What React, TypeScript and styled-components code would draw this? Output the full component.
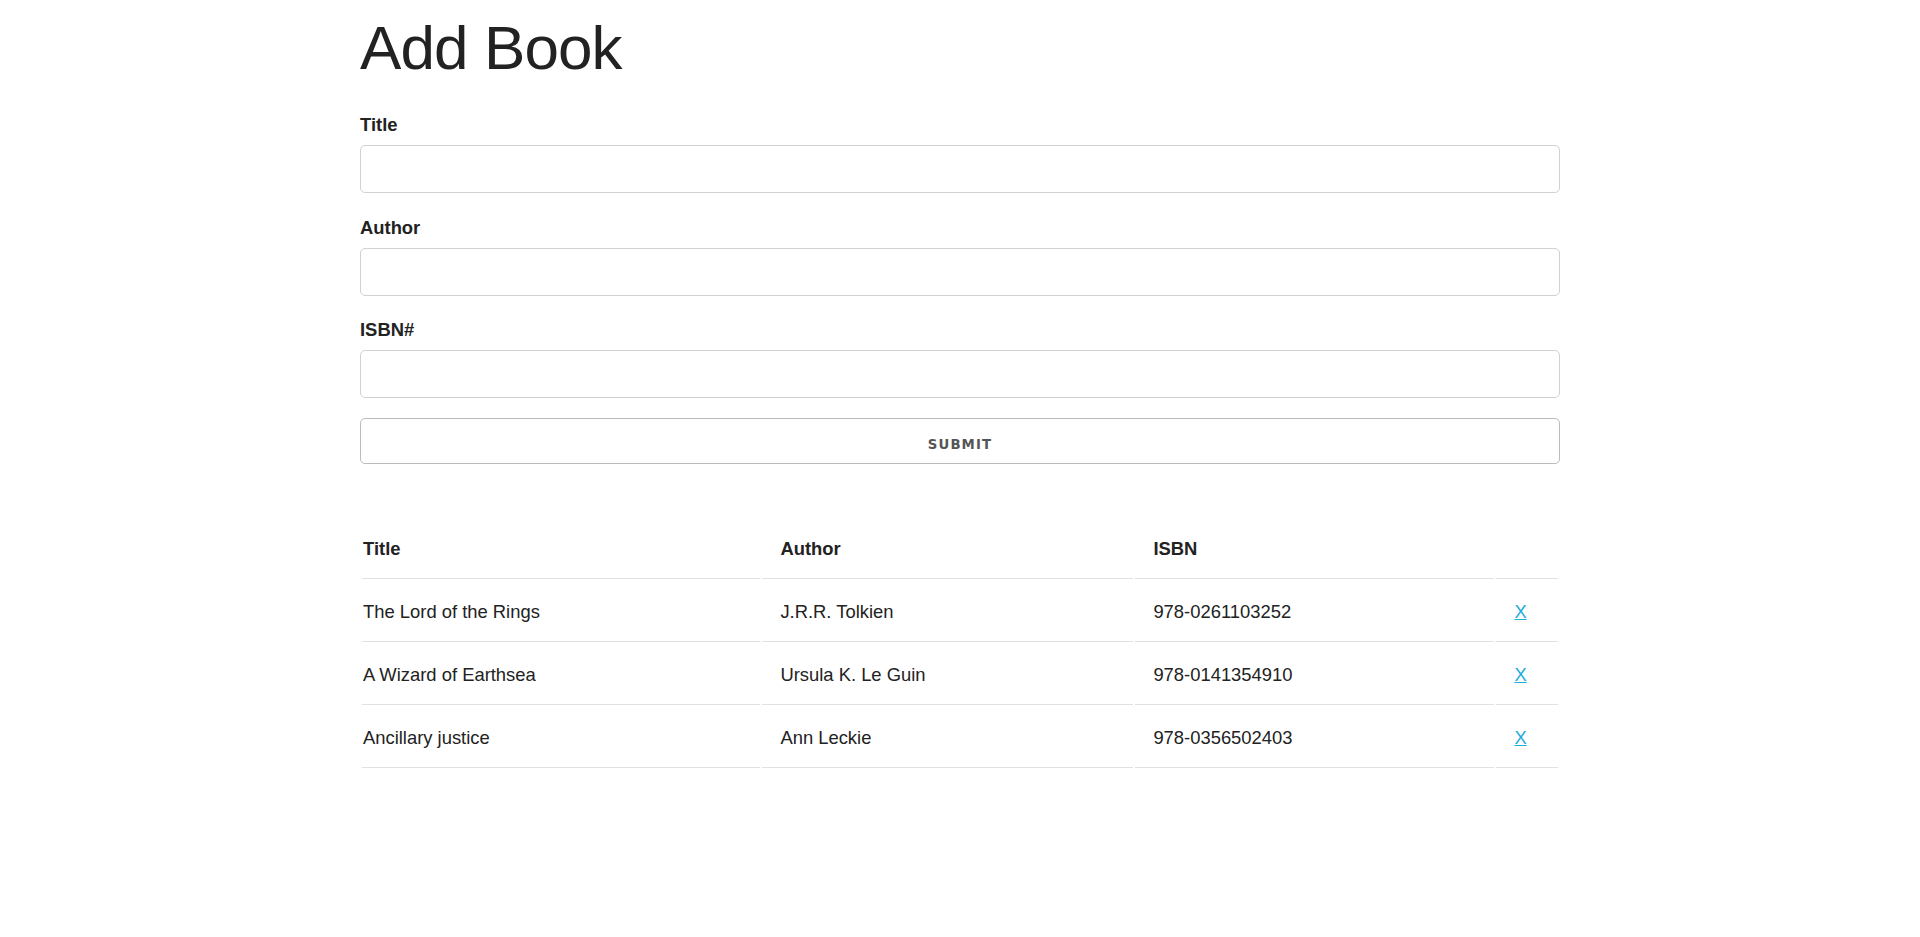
import React, { useState } from "react";
import styled, { createGlobalStyle } from "styled-components";

type Book = { title: string; author: string; isbn: string };

const initialBooks: Book[] = [
  { title: "The Lord of the Rings", author: "J.R.R. Tolkien", isbn: "978-0261103252" },
  { title: "A Wizard of Earthsea", author: "Ursula K. Le Guin", isbn: "978-0141354910" },
  { title: "Ancillary justice", author: "Ann Leckie", isbn: "978-0356502403" },
];

export default function App() {
  const [books, setBooks] = useState<Book[]>(initialBooks);
  const [title, setTitle] = useState("");
  const [author, setAuthor] = useState("");
  const [isbn, setIsbn] = useState("");

  function handleSubmit(e: React.FormEvent) {
    e.preventDefault();
    if (!title || !author || !isbn) return;
    setBooks([...books, { title, author, isbn }]);
    setTitle("");
    setAuthor("");
    setIsbn("");
  }

  function removeBook(index: number) {
    setBooks(books.filter((_, i) => i !== index));
  }

  return (
    <>
      <GlobalStyle />
      <Container>
        <Heading>Add Book</Heading>
        <form onSubmit={handleSubmit}>
          <Label htmlFor="title">Title</Label>
          <Input id="title" type="text" value={title} onChange={(e) => setTitle(e.target.value)} />
          <Label htmlFor="author">Author</Label>
          <Input id="author" type="text" value={author} onChange={(e) => setAuthor(e.target.value)} />
          <Label htmlFor="isbn">ISBN#</Label>
          <Input id="isbn" type="text" value={isbn} onChange={(e) => setIsbn(e.target.value)} />
          <SubmitButton type="submit">Submit</SubmitButton>
        </form>

        <BookTable>
          <thead>
            <tr>
              <Th $width={398}>Title</Th>
              <Th $width={371}>Author</Th>
              <Th $width={359}>ISBN</Th>
              <Th />
            </tr>
          </thead>
          <tbody>
            {books.map((book, i) => (
              <tr key={book.isbn + i}>
                <Td>{book.title}</Td>
                <Td>{book.author}</Td>
                <Td>{book.isbn}</Td>
                <Td>
                  <DeleteLink
                    href="#"
                    onClick={(e) => {
                      e.preventDefault();
                      removeBook(i);
                    }}
                  >
                    X
                  </DeleteLink>
                </Td>
              </tr>
            ))}
          </tbody>
        </BookTable>
      </Container>
    </>
  );
}

const GlobalStyle = createGlobalStyle`
  * {
    box-sizing: border-box;
  }
  body {
    margin: 0;
    background: #fff;
    color: #222;
    font-family: "Liberation Sans", Arial, sans-serif;
    font-size: 18.4px;
    line-height: 1.6;
  }
`;

const Container = styled.div`
  width: 1200px;
  margin: 0 auto;
  padding-top: 12px;
`;

const Heading = styled.h1`
  margin: -1px 0 25px;
  font-size: 62px;
  font-weight: 400;
  line-height: 1.2;
  letter-spacing: -0.9px;
  color: #222;
`;

const Label = styled.label`
  display: block;
  margin-bottom: 6px;
  font-size: 18.4px;
  font-weight: 700;
  line-height: 29px;
`;

const Input = styled.input`
  display: block;
  width: 100%;
  height: 48px;
  margin: 0 0 19.5px;
  padding: 7px 12px;
  border: 1px solid #d1d1d1;
  border-radius: 5px;
  background: #fff;
  font-family: "Liberation Sans", Arial, sans-serif;
  font-size: 18.4px;
  color: #222;
  outline: none;

  &:focus {
    border-color: #33c3f0;
  }
`;

const SubmitButton = styled.button`
  display: block;
  width: 100%;
  height: 46.5px;
  margin: 0;
  padding: 6px 37px 0;
  border: 1px solid #bbb;
  border-radius: 5px;
  background: transparent;
  color: #555;
  font-family: "DejaVu Sans", Verdana, sans-serif;
  font-size: 13.3px;
  font-weight: 700;
  letter-spacing: 1.1px;
  text-transform: uppercase;
  cursor: pointer;

  &:hover {
    border-color: #888;
    color: #333;
  }
`;

const BookTable = styled.table`
  width: 100%;
  margin-top: 52px;
  table-layout: fixed;
  border-collapse: separate;
  border-spacing: 2px;
`;

const cell = `
  text-align: left;
  padding: 16px 18.4px 14px;
  line-height: 30px;
  font-size: 18.4px;
  border-bottom: 1px solid #e1e1e1;
  &:first-child {
    padding-left: 1px;
  }
  &:last-child {
    padding-right: 0;
  }
`;

const Th = styled.th<{ $width?: number }>`
  ${cell};
  font-weight: 700;
  width: ${(p) => (p.$width ? `${p.$width}px` : "auto")};
`;

const Td = styled.td`
  ${cell};
  font-weight: 400;
`;

const DeleteLink = styled.a`
  color: #1eaedb;
  text-decoration: underline;

  &:hover {
    color: #0fa0ce;
  }
`;
